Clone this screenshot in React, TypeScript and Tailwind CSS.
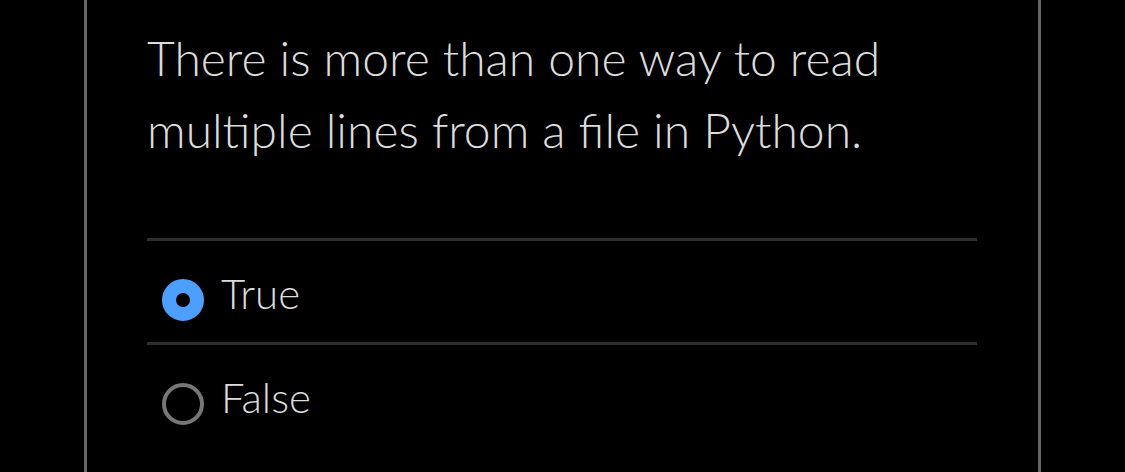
import React, { useState } from "react";

const options = ["True", "False"];

export default function App() {
  const [selected, setSelected] = useState("True");

  return (
    <div
      className="w-[1125px] h-[472px] bg-black overflow-hidden"
      style={{ fontFamily: "Lato, 'Open Sans', sans-serif" }}
    >
      <div className="ml-[84px] w-[957px] h-full border-x-[3px] border-[#666666] pl-[60px] pr-[61px] pt-[22px]">
        <p className="text-[48px] leading-[72px] font-light text-[#dcdcdc]">
          There is more than one way to read multiple lines from a file in Python.
        </p>
        <div className="mt-[72px]">
          {options.map((opt) => {
            const active = selected === opt;
            return (
              <div key={opt} className="border-t-[3px] border-[#2e2e2e]">
                <button
                  onClick={() => setSelected(opt)}
                  className="flex items-start w-full h-[101px] pt-[38px] pl-[15px] text-left"
                >
                  {active ? (
                    <span className="w-[42px] h-[42px] rounded-full border-[14px] border-[#4d9ffe] shrink-0" />
                  ) : (
                    <span className="w-[42px] h-[42px] rounded-full border-[4px] border-[#777777] shrink-0" />
                  )}
                  <span className="ml-[17px] -mt-[7px] text-[42px] leading-[42px] font-light text-[#dcdcdc]">
                    {opt}
                  </span>
                </button>
              </div>
            );
          })}
        </div>
      </div>
    </div>
  );
}
